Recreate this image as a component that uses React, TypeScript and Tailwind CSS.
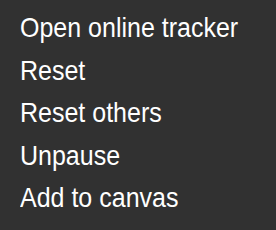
const items = ["Open online tracker", "Reset", "Reset others", "Unpause", "Add to canvas"];

export default function App() {
  return (
    <div className="h-[230px] w-[276px] overflow-hidden bg-[#313131] pl-5 pt-[6px] font-['Liberation_Sans',sans-serif] text-white">
      <ul className="flex flex-col">
        {items.map((label) => (
          <li key={label} className="h-[42.5px] origin-left scale-y-[1.1] text-[25px] leading-[42px]">
            {label}
          </li>
        ))}
      </ul>
    </div>
  );
}
